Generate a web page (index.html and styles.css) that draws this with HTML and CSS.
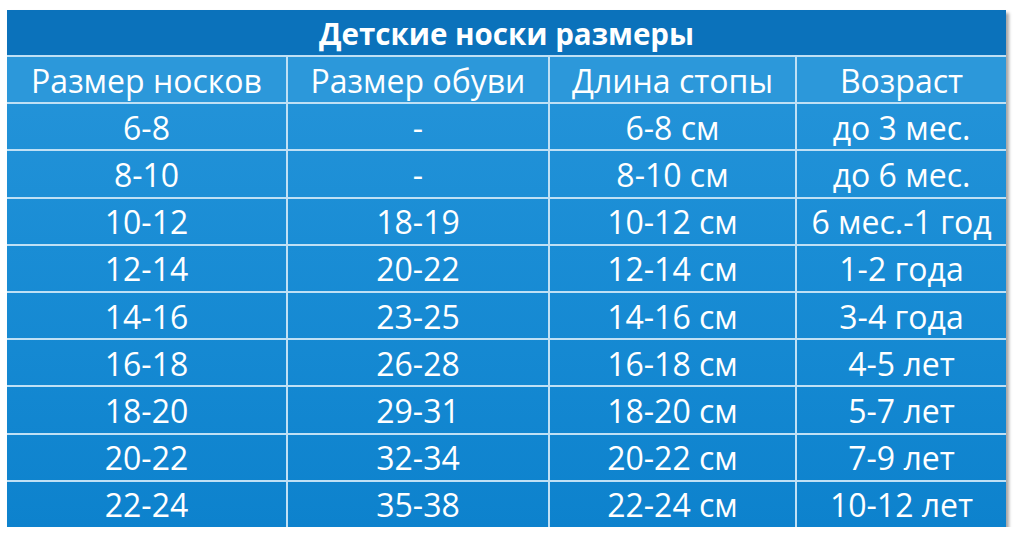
FILE: index.html
```html
<!DOCTYPE html>
<html lang="ru">
<head>
<meta charset="utf-8">
<title>Детские носки размеры</title>
<link rel="stylesheet" href="styles.css">
</head>
<body>
<div class="wrap">
<table class="sizes">
  <colgroup>
    <col class="c1"><col class="c2"><col class="c3"><col class="c4">
  </colgroup>
  <thead>
    <tr class="title"><th colspan="4">Детские носки размеры</th></tr>
    <tr class="head"><th>Размер носков</th><th>Размер обуви</th><th>Длина стопы</th><th>Возраст</th></tr>
  </thead>
  <tbody>
    <tr><td>6-8</td><td>-</td><td>6-8 см</td><td>до 3 мес.</td></tr>
    <tr><td>8-10</td><td>-</td><td>8-10 см</td><td>до 6 мес.</td></tr>
    <tr><td>10-12</td><td>18-19</td><td>10-12 см</td><td>6 мес.-1 год</td></tr>
    <tr><td>12-14</td><td>20-22</td><td>12-14 см</td><td>1-2 года</td></tr>
    <tr><td>14-16</td><td>23-25</td><td>14-16 см</td><td>3-4 года</td></tr>
    <tr><td>16-18</td><td>26-28</td><td>16-18 см</td><td>4-5 лет</td></tr>
    <tr><td>18-20</td><td>29-31</td><td>18-20 см</td><td>5-7 лет</td></tr>
    <tr><td>20-22</td><td>32-34</td><td>20-22 см</td><td>7-9 лет</td></tr>
    <tr><td>22-24</td><td>35-38</td><td>22-24 см</td><td>10-12 лет</td></tr>
  </tbody>
</table>
</div>
</body>
</html>
```

FILE: styles.css
```css
html, body {
  margin: 0;
  padding: 0;
  background: #ffffff;
}
.wrap {
  padding: 10px 0 0 7px;
}
.sizes {
  width: 999px;
  table-layout: fixed;
  border-collapse: collapse;
  border-style: hidden;
  font-family: "Open Sans", "Noto Sans", sans-serif;
  color: #ffffff;
  background: linear-gradient(180deg, #2896da 0%, #1a8dd5 45%, #0d82cd 100%);
  box-shadow: 3px 3px 3px rgba(0, 0, 0, 0.35);
}
.c1 { width: 280px; }
.c2 { width: 262px; }
.c3 { width: 247px; }
.c4 { width: 210px; }
.sizes th, .sizes td {
  border: 2px solid #bfe0f5;
  padding: 2px 0 0;
  text-align: center;
  font-weight: 400;
  font-size: 32px;
  line-height: 1;
  height: 43.2px;
  white-space: nowrap;
}
.sizes .title th {
  background: #0b72bb;
  font-weight: 700;
  font-size: 29.5px;
  height: 43px;
}
.sizes .head th {
  background: #2c98da;
}
```
